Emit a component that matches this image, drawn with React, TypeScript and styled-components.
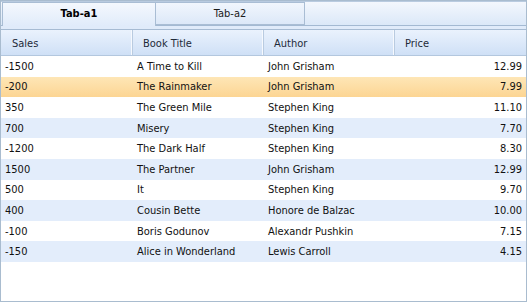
import React from "react";
import styled, { createGlobalStyle } from "styled-components";

const Global = createGlobalStyle`
  html, body { margin: 0; padding: 0; background: #ffffff; }
  body { font-family: "DejaVu Sans Condensed", "DejaVu Sans", sans-serif; font-stretch: semi-condensed; }
`;

const Frame = styled.div`
  box-sizing: border-box;
  width: 527px;
  height: 302px;
  border: 1px solid #a9bccf;
  background: #ffffff;
  display: flex;
  flex-direction: column;
  overflow: hidden;
`;

const TabStrip = styled.div`
  box-sizing: border-box;
  height: 25px;
  padding: 1px 0 0 1px;
  display: flex;
  align-items: flex-end;
  background: linear-gradient(#f3f7fd, #dbe8f8);
  border-bottom: 1px solid #a3b9d2;
  border-top: 1px solid #b9cbe0;
`;

const Tab = styled.div<{ $active?: boolean }>`
  box-sizing: border-box;
  width: ${(p) => (p.$active ? 154 : 149)}px;
  height: ${(p) => (p.$active ? 24 : 23)}px;
  margin-bottom: ${(p) => (p.$active ? -1 : 0)}px;
  border: 1px solid #a9bdd4;
  border-bottom: ${(p) => (p.$active ? "none" : "1px solid #a9bdd4")};
  border-left: ${(p) => (p.$active ? "1px solid #a9bdd4" : "none")};
  background: ${(p) =>
    p.$active
      ? "linear-gradient(#f4f8fe, #e0ebfa)"
      : "linear-gradient(#f1f6fd, #dce8f8)"};
  font-size: 11px;
  font-weight: ${(p) => (p.$active ? 700 : 400)};
  color: ${(p) => (p.$active ? "#000" : "#1b1b1b")};
  display: flex;
  align-items: center;
  justify-content: center;
  padding-bottom: ${(p) => (p.$active ? 2 : 1)}px;
`;

const Band = styled.div`
  height: 3px;
  background: #e0ebfa;
  border-bottom: 1px solid #a6bbd3;
`;

const Grid = styled.div`
  display: grid;
  grid-template-columns: 132px 131px 131px 1fr;
`;

const HeadCell = styled.div<{ $last?: boolean; $first?: boolean }>`
  box-sizing: border-box;
  height: 26px;
  padding: 2px 0 0 ${(p) => (p.$first ? 11 : 10)}px;
  display: flex;
  align-items: center;
  font-size: 11px;
  color: #1e2a38;
  background: linear-gradient(#eaf2fd, #cfe0f6);
  border-bottom: 1px solid #b3c7de;
  border-right: ${(p) => (p.$last ? "none" : "1px solid #b9cbe0")};
  box-shadow: ${(p) => (p.$last ? "none" : "inset -1px 0 0 #f6f9fe")};
`;

const Row = styled.div<{ $kind: "plain" | "alt" | "sel" }>`
  display: contents;
  & > div {
    background: ${(p) =>
      p.$kind === "sel"
        ? "linear-gradient(#fee6b6, #fcd593)"
        : p.$kind === "alt"
        ? "#e3edfb"
        : "#ffffff"};
  }
`;

const Cell = styled.div<{ $right?: boolean }>`
  box-sizing: border-box;
  height: 20.6px;
  display: flex;
  align-items: center;
  justify-content: ${(p) => (p.$right ? "flex-end" : "flex-start")};
  padding: 0 ${(p) => (p.$right ? 4 : 0)}px 0 ${(p) => (p.$right ? 0 : 4)}px;
  font-size: 11px;
  color: #111;
  white-space: nowrap;
`;

const data: [string, string, string, string][] = [
  ["-1500", "A Time to Kill", "John Grisham", "12.99"],
  ["-200", "The Rainmaker", "John Grisham", "7.99"],
  ["350", "The Green Mile", "Stephen King", "11.10"],
  ["700", "Misery", "Stephen King", "7.70"],
  ["-1200", "The Dark Half", "Stephen King", "8.30"],
  ["1500", "The Partner", "John Grisham", "12.99"],
  ["500", "It", "Stephen King", "9.70"],
  ["400", "Cousin Bette", "Honore de Balzac", "10.00"],
  ["-100", "Boris Godunov", "Alexandr Pushkin", "7.15"],
  ["-150", "Alice in Wonderland", "Lewis Carroll", "4.15"],
];

export default function App() {
  return (
    <>
      <Global />
      <Frame>
        <TabStrip>
          <Tab $active>Tab-a1</Tab>
          <Tab>Tab-a2</Tab>
        </TabStrip>
        <Band />
        <Grid>
          <HeadCell $first>Sales</HeadCell>
          <HeadCell>Book Title</HeadCell>
          <HeadCell>Author</HeadCell>
          <HeadCell $last>Price</HeadCell>
          {data.map((r, i) => (
            <Row key={i} $kind={i === 1 ? "sel" : i % 2 === 1 ? "alt" : "plain"}>
              <Cell>{r[0]}</Cell>
              <Cell>{r[1]}</Cell>
              <Cell>{r[2]}</Cell>
              <Cell $right>{r[3]}</Cell>
            </Row>
          ))}
        </Grid>
      </Frame>
    </>
  );
}
